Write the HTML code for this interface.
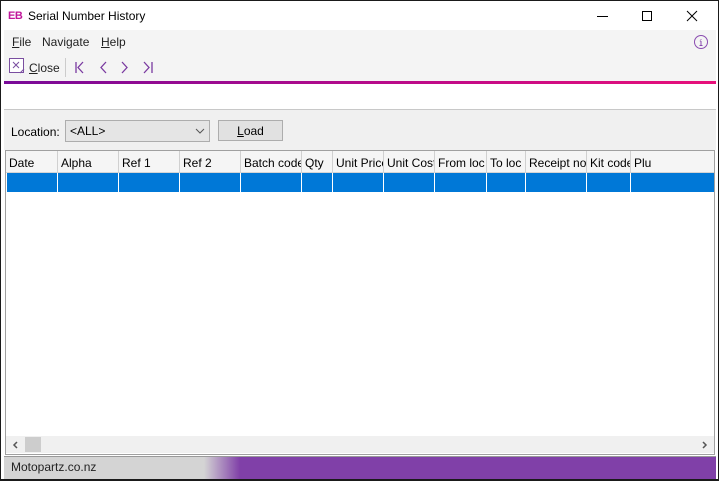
<!DOCTYPE html>
<html><head><meta charset="utf-8"><style>
*{margin:0;padding:0;box-sizing:border-box}
body{width:720px;height:481px;background:#fff;font-family:"Liberation Sans",Arial,sans-serif;font-size:12px;color:#000;position:relative;overflow:hidden}
.abs{position:absolute}
.win{left:0;top:0;width:719px;height:481px;border:1px solid #1a1a1a;border-bottom:2px solid #1a1a1a}
u{text-decoration:underline}
.col{position:absolute;top:0;height:22px;border-right:1px solid #d0d0d0;padding:5px 0 0 3px;white-space:nowrap;overflow:hidden;font-size:12px}
.sel{position:absolute;top:22px;height:19px;background:#0078d7;border-right:1px solid #fff}
</style></head><body>
<div class="abs win"></div>
<div class="abs" style="left:8px;top:10px;font-weight:bold;font-size:11px;color:#c0169a;letter-spacing:-0.5px">EB</div>
<div class="abs" style="left:28px;top:9px;font-size:12px">Serial Number History</div>
<div class="abs" style="left:597px;top:16px;width:11px;height:1px;background:#000"></div>
<div class="abs" style="left:642px;top:11px;width:10px;height:10px;border:1px solid #000"></div>
<svg class="abs" style="left:686px;top:10px" width="12" height="12"><path d="M1 1L11 11M11 1L1 11" stroke="#000" stroke-width="1"/></svg>
<div class="abs" style="left:4px;top:30px;width:712px;height:51px;background:#f4f4f4"></div>
<div class="abs" style="left:12px;top:35px;color:#222"><u>F</u>ile</div>
<div class="abs" style="left:42px;top:35px;color:#222">Navigate</div>
<div class="abs" style="left:101px;top:35px;color:#222"><u>H</u>elp</div>
<svg class="abs" style="left:693px;top:34px" width="16" height="16"><circle cx="8" cy="8" r="6.5" fill="none" stroke="#8a4cb0"/><path d="M8 5v0.8M8 7v4.5M6.5 11.5h3M6.8 7h1.2" stroke="#8a4cb0"/></svg>
<svg class="abs" style="left:9px;top:58px" width="17" height="17"><rect x="0.5" y="0.5" width="14" height="14" fill="#fff" stroke="#7a4ea0"/><path d="M4 4l6 6M10 4l-6 6" stroke="#7a4ea0"/><path d="M11 15l4-4" stroke="#7a4ea0"/></svg>
<div class="abs" style="left:29px;top:61px;color:#222"><u>C</u>lose</div>
<div class="abs" style="left:65px;top:58px;width:1px;height:19px;background:#ccc"></div>
<svg class="abs" style="left:74px;top:61px" width="84" height="14" fill="none" stroke="#7a3aa0" stroke-width="1.3"><path d="M2 1v11M9 1l-5 5.5 5 5.5"/><path d="M32 1l-5 5.5 5 5.5"/><path d="M48 1l5 5.5-5 5.5"/><path d="M70 1l5 5.5-5 5.5M78 1v11"/></svg>
<div class="abs" style="left:4px;top:81px;width:712px;height:3px;background:linear-gradient(90deg,#780a98,#c00a88 60%,#e8107a)"></div>
<div class="abs" style="left:4px;top:109px;width:712px;height:1px;background:#c8c8c8"></div>
<div class="abs" style="left:4px;top:110px;width:712px;height:40px;background:#f0f0f0"></div>
<div class="abs" style="left:11px;top:125px">Location:</div>
<div class="abs" style="left:65px;top:120px;width:145px;height:22px;border:1px solid #adadad;background:#e5e5e5;padding:3px 0 0 4px">&lt;ALL&gt;</div>
<svg class="abs" style="left:195px;top:128px" width="10" height="6"><path d="M1 1l4 4 4-4" fill="none" stroke="#555"/></svg>
<div class="abs" style="left:218px;top:120px;width:65px;height:21px;border:1px solid #adadad;background:#e1e1e1;text-align:center;padding-top:3px"><u>L</u>oad</div>
<div class="abs" style="left:5px;top:150px;width:710px;height:305px;border:1px solid #a0a0a0;background:#fff">
 <div class="abs" style="left:0;top:0;width:708px;height:22px;background:#f5f5f5;border-bottom:1px solid #d5d5d5"></div>
 <div class="col" style="left:0;width:52px">Date</div>
 <div class="col" style="left:52px;width:61px">Alpha</div>
 <div class="col" style="left:113px;width:61px">Ref 1</div>
 <div class="col" style="left:174px;width:61px">Ref 2</div>
 <div class="col" style="left:235px;width:61px">Batch code</div>
 <div class="col" style="left:296px;width:31px">Qty</div>
 <div class="col" style="left:327px;width:51px">Unit Price</div>
 <div class="col" style="left:378px;width:51px">Unit Cost</div>
 <div class="col" style="left:429px;width:52px">From loc</div>
 <div class="col" style="left:481px;width:39px">To loc</div>
 <div class="col" style="left:520px;width:61px">Receipt no</div>
 <div class="col" style="left:581px;width:44px">Kit code</div>
 <div class="col" style="left:625px;width:83px;border-right:none">Plu</div>
 <div class="sel" style="left:1px;width:51px"></div>
 <div class="sel" style="left:52px;width:61px"></div>
 <div class="sel" style="left:113px;width:61px"></div>
 <div class="sel" style="left:174px;width:61px"></div>
 <div class="sel" style="left:235px;width:61px"></div>
 <div class="sel" style="left:296px;width:31px"></div>
 <div class="sel" style="left:327px;width:51px"></div>
 <div class="sel" style="left:378px;width:51px"></div>
 <div class="sel" style="left:429px;width:52px"></div>
 <div class="sel" style="left:481px;width:39px"></div>
 <div class="sel" style="left:520px;width:61px"></div>
 <div class="sel" style="left:581px;width:44px"></div>
 <div class="sel" style="left:625px;width:83px;border-right:none"></div>
 <div class="abs" style="left:0;top:285px;width:708px;height:17px;background:#f0f0f0"></div>
 <div class="abs" style="left:19px;top:286px;width:16px;height:15px;background:#cdcdcd"></div>
 <svg class="abs" style="left:6px;top:290px" width="8" height="8"><path d="M5 1L2 4l3 3" fill="none" stroke="#555" stroke-width="1.5"/></svg>
 <svg class="abs" style="left:695px;top:290px" width="8" height="8"><path d="M2 1l3 3-3 3" fill="none" stroke="#555" stroke-width="1.5"/></svg>
</div>
<div class="abs" style="left:4px;top:456px;width:712px;height:23px;background:linear-gradient(90deg,#d4d4d4 0,#d4d4d4 200px,#8040a8 236px,#8040a8 100%);border-top:1px solid #999"></div>
<div class="abs" style="left:11px;top:460px;color:#222">Motopartz.co.nz</div>
</body></html>
